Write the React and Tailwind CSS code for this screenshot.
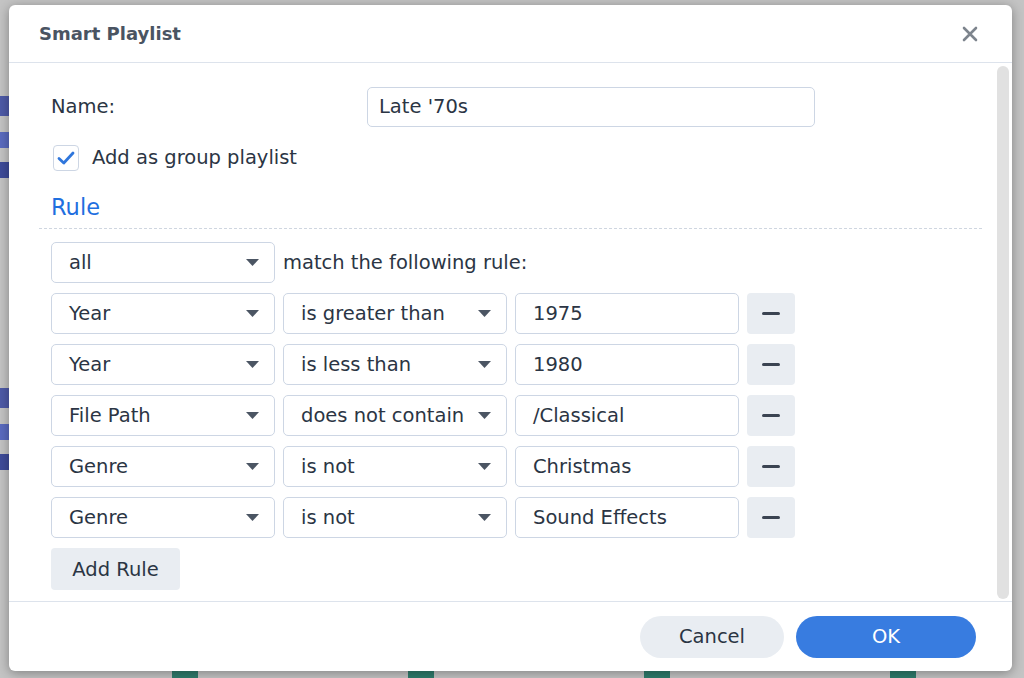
import React from 'react';

const font = { fontFamily: '"DejaVu Sans", Verdana, sans-serif' };

const Caret = () => (
  <svg width="13" height="7" viewBox="0 0 13 7" className="shrink-0">
    <path d="M0 0h13L6.5 7z" fill="#4b5563" />
  </svg>
);

const Select = ({ value }) => (
  <div className="flex h-[41px] w-[224px] shrink-0 items-center justify-between rounded-[5px] border border-[#cdd6e4] bg-white pl-[17px] pr-[15px] text-[19.5px] text-[#2b3544]">
    <span>{value}</span>
    <Caret />
  </div>
);

const TextBox = ({ value, className = 'h-[41px] w-[224px] pl-[17px]' }) => (
  <div
    className={`flex items-center rounded-[5px] border border-[#cdd6e4] bg-white text-[19.5px] text-[#2b3544] ${className}`}
  >
    {value}
  </div>
);

const MinusButton = () => (
  <div className="flex h-[41px] w-[48px] shrink-0 items-center justify-center rounded-[4px] bg-[#e9edf2]">
    <div className="h-[3px] w-[18px] rounded-sm bg-[#3b4452]" />
  </div>
);

const rules = [
  ['Year', 'is greater than', '1975'],
  ['Year', 'is less than', '1980'],
  ['File Path', 'does not contain', '/Classical'],
  ['Genre', 'is not', 'Christmas'],
  ['Genre', 'is not', 'Sound Effects'],
];

const Backdrop = () => (
  <div className="pointer-events-none absolute inset-0">
    <div className="absolute left-0 top-[96px] h-[20px] w-[9px] bg-[#4e5aa8]" />
    <div className="absolute left-0 top-[132px] h-[16px] w-[9px] bg-[#5a6bc0]" />
    <div className="absolute left-0 top-[162px] h-[16px] w-[9px] bg-[#3f4c9a]" />
    <div className="absolute left-0 top-[388px] h-[20px] w-[9px] bg-[#4e5aa8]" />
    <div className="absolute left-0 top-[424px] h-[16px] w-[9px] bg-[#5a6bc0]" />
    <div className="absolute left-0 top-[454px] h-[16px] w-[9px] bg-[#3f4c9a]" />
    <div className="absolute bottom-0 left-[172px] h-[8px] w-[26px] bg-[#2f7d6d]" />
    <div className="absolute bottom-0 left-[408px] h-[8px] w-[26px] bg-[#2f7d6d]" />
    <div className="absolute bottom-0 left-[644px] h-[8px] w-[26px] bg-[#2f7d6d]" />
    <div className="absolute bottom-0 left-[890px] h-[8px] w-[26px] bg-[#2f7d6d]" />
  </div>
);

export default function App() {
  return (
    <div className="relative h-[678px] w-[1024px] overflow-hidden bg-[#c4c4c4]" style={font}>
      <Backdrop />
      <div className="relative pl-[9px] pt-[5px]">
        <div className="flex h-[666px] w-[1003px] flex-col rounded-[6px] bg-white shadow-[0_2px_12px_rgba(0,0,0,0.35)]">
          {/* header */}
          <div className="flex h-[58px] shrink-0 items-center justify-between border-b border-[#dde3ec] pl-[30px] pr-[34px]">
            <span className="text-[18px] font-bold text-[#4a5462]">Smart Playlist</span>
            <svg width="16" height="16" viewBox="0 0 16 16">
              <path d="M2 2L14 14M14 2L2 14" stroke="#7d848d" strokeWidth="2.6" strokeLinecap="round" />
            </svg>
          </div>

          {/* body */}
          <div className="flex min-h-0 flex-1">
            <div className="flex-1 pl-[30px] pr-[15px]">
              <div className="flex items-center pl-[12px] pt-[24px]">
                <span className="w-[316px] text-[19.5px] text-[#2b3544]">Name:</span>
                <TextBox value="Late '70s" className="h-[40px] w-[448px] pl-[11px]" />
              </div>

              <div className="mt-[16px] flex items-center pl-[14px]">
                <div className="flex h-[26px] w-[26px] items-center justify-center rounded-[4px] border border-[#cdd6e4] bg-white">
                  <svg width="18" height="14" viewBox="0 0 18 14">
                    <path d="M2 7.5L6.8 12L16 2" fill="none" stroke="#2f76dc" strokeWidth="2.8" strokeLinecap="round" strokeLinejoin="round" />
                  </svg>
                </div>
                <span className="ml-[13px] text-[19.5px] text-[#2b3544]">Add as group playlist</span>
              </div>

              <div className="mt-[20px] pl-[12px] text-[22.5px] leading-[30px] text-[#1f6fdf]">Rule</div>
              <div className="mt-[6px] border-t border-dashed border-[#cfd6e0]" />

              <div className="flex flex-col gap-[10px] pl-[12px] pt-[13px]">
                <div className="flex items-center gap-[8px]">
                  <Select value="all" />
                  <span className="text-[19.5px] text-[#2b3544]">match the following rule:</span>
                </div>
                {rules.map(([field, op, val], i) => (
                  <div key={i} className="flex items-center gap-[8px]">
                    <Select value={field} />
                    <Select value={op} />
                    <TextBox value={val} />
                    <MinusButton />
                  </div>
                ))}
                <div className="flex h-[42px] w-[129px] items-center justify-center rounded-[4px] bg-[#e9edf2] text-[19.5px] text-[#2b3544]">
                  Add Rule
                </div>
              </div>
            </div>
            <div className="flex w-[15px] shrink-0 pt-[3px] pb-[2px]">
              <div className="w-[12px] rounded-full bg-[#e1e1e1]" />
            </div>
          </div>

          {/* footer */}
          <div className="flex h-[70px] shrink-0 items-center justify-end gap-[12px] border-t border-[#dde3ec] pr-[36px]">
            <div className="flex h-[42px] w-[144px] items-center justify-center rounded-full bg-[#e9edf2] text-[19.5px] text-[#2b3544]">
              Cancel
            </div>
            <div className="flex h-[42px] w-[180px] items-center justify-center rounded-full bg-[#387ce0] text-[19.5px] text-white">
              OK
            </div>
          </div>
        </div>
      </div>
    </div>
  );
}
